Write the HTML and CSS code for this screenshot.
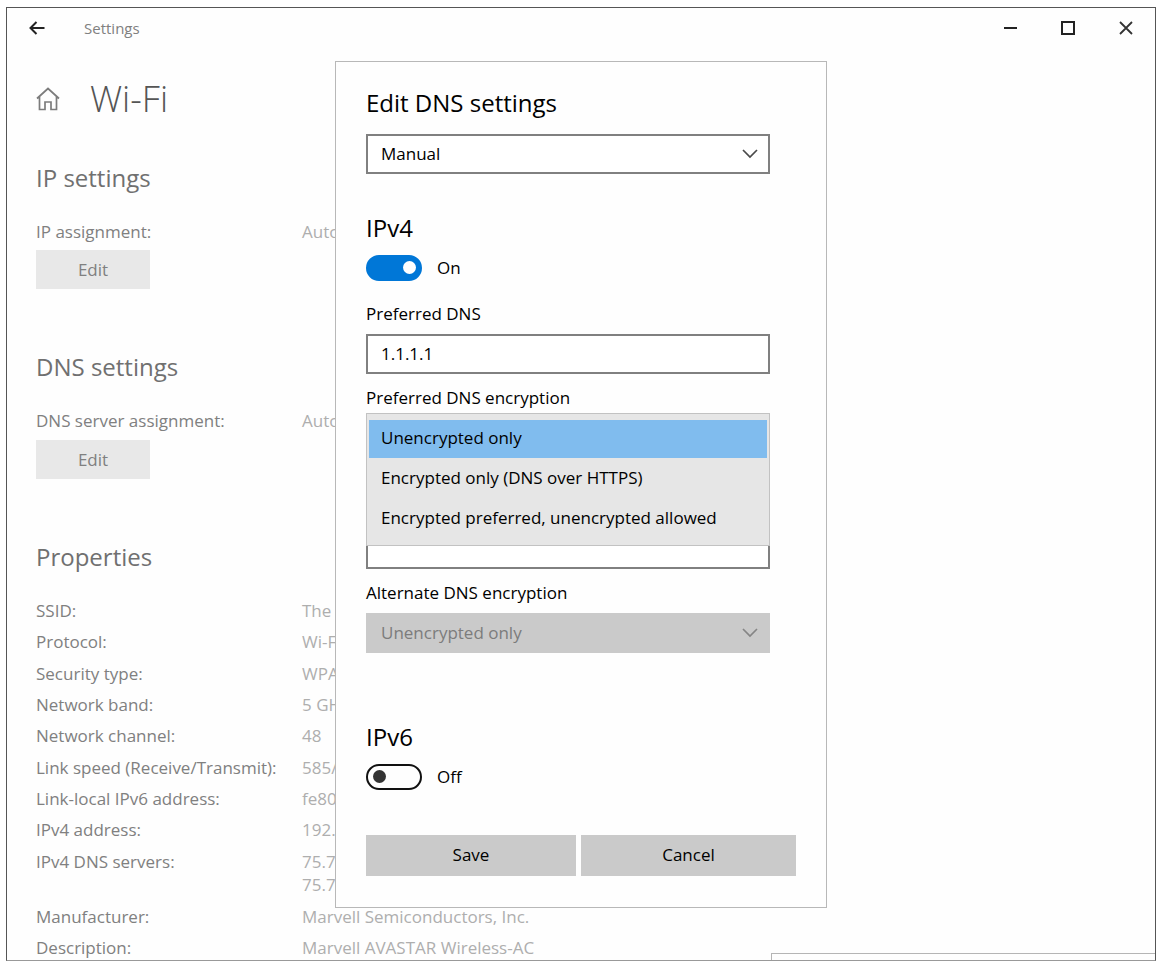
FILE: index.html
```html
<!DOCTYPE html>
<html lang="en">
<head>
<meta charset="utf-8">
<meta name="viewport" content="width=device-width, initial-scale=1">
<title>Settings</title>
<link rel="stylesheet" href="styles.css">
</head>
<body>
<div class="window">
  <header class="titlebar">
    <button class="back" type="button" aria-label="Back">
      <svg width="18" height="16" viewBox="0 0 18 16"><path d="M16.500 8H3M8.500 2L2.500 8l6 6" fill="none" stroke="#222" stroke-width="2"/></svg>
    </button>
    <span class="app-name">Settings</span>
    <div class="window-controls">
      <button type="button" aria-label="Minimize"><svg width="14" height="14" viewBox="0 0 14 14"><path d="M1 7h13" stroke="#222" stroke-width="2"/></svg></button>
      <button type="button" aria-label="Maximize"><svg width="14" height="14" viewBox="0 0 14 14"><rect x="1" y="1" width="12" height="12" fill="none" stroke="#222" stroke-width="2"/></svg></button>
      <button type="button" aria-label="Close"><svg width="14" height="14" viewBox="0 0 14 14"><path d="M1 1l12 12M13 1L1 13" stroke="#333" stroke-width="1.800"/></svg></button>
    </div>
  </header>

  <main class="page">
    <div class="page-title">
      <svg width="24" height="24" viewBox="0 0 24 24"><path d="M1 11.500L12 1.500l11 10M3.500 9.500V22.500h5.500v-7.500h6v7.500h5.500V9.500" fill="none" stroke="#7c7c7c" stroke-width="1.700"/></svg>
      <h1>Wi-Fi</h1>
    </div>

    <section class="group">
      <h2>IP settings</h2>
      <dl class="rows"><dt>IP assignment:</dt><dd>Auto</dd></dl>
      <button class="edit" type="button">Edit</button>
    </section>

    <section class="group">
      <h2>DNS settings</h2>
      <dl class="rows"><dt>DNS server assignment:</dt><dd>Auto</dd></dl>
      <button class="edit" type="button">Edit</button>
    </section>

    <section class="group">
      <h2>Properties</h2>
      <dl class="rows">
        <dt>SSID:</dt><dd>The</dd>
        <dt>Protocol:</dt><dd>Wi-Fi</dd>
        <dt>Security type:</dt><dd>WPA</dd>
        <dt>Network band:</dt><dd>5 GHz</dd>
        <dt>Network channel:</dt><dd>48</dd>
        <dt>Link speed (Receive/Transmit):</dt><dd>585/</dd>
        <dt>Link-local IPv6 address:</dt><dd>fe80</dd>
        <dt>IPv4 address:</dt><dd>192.1</dd>
        <dt>IPv4 DNS servers:</dt><dd>75.75<br>75.75</dd>
        <dt>Manufacturer:</dt><dd>Marvell Semiconductors, Inc.</dd>
        <dt>Description:</dt><dd>Marvell AVASTAR Wireless-AC</dd>
      </dl>
    </section>
  </main>

  <div class="overlay">
    <form class="dialog" role="dialog" aria-labelledby="dialog-title">
      <h2 id="dialog-title">Edit DNS settings</h2>
      <div class="combo mode">
        <select aria-labelledby="dialog-title"><option>Manual</option></select>
        <svg class="chevron" width="18" height="10" viewBox="0 0 18 10"><path d="M2 1l7 7 7-7" fill="none" stroke="#4a4a4a" stroke-width="1.700"/></svg>
      </div>

      <h2 class="protocol">IPv4</h2>
      <label class="toggle"><input type="checkbox" role="switch" checked><span>On</span></label>

      <label class="caption first" for="dns1">Preferred DNS</label>
      <input class="text" id="dns1" type="text" value="1.1.1.1">

      <label class="caption open" for="enc1">Preferred DNS encryption</label>
      <div class="anchor">
        <select class="menu" id="enc1" size="3">
          <option selected>Unencrypted only</option>
          <option>Encrypted only (DNS over HTTPS)</option>
          <option>Encrypted preferred, unencrypted allowed</option>
        </select>
      </div>
      <input class="text" type="text" aria-label="Alternate DNS">

      <label class="caption" for="enc2">Alternate DNS encryption</label>
      <div class="combo">
        <select id="enc2" disabled><option>Unencrypted only</option></select>
        <svg class="chevron" width="18" height="10" viewBox="0 0 18 10"><path d="M2 1l7 7 7-7" fill="none" stroke="#858585" stroke-width="1.700"/></svg>
      </div>

      <h2 class="protocol last">IPv6</h2>
      <label class="toggle"><input type="checkbox" role="switch"><span>Off</span></label>

      <div class="actions">
        <button type="submit">Save</button>
        <button type="button">Cancel</button>
      </div>
    </form>
  </div>
  <div class="corner-panel"></div>
</div>
</body>
</html>
```
FILE: styles.css
```css
* { box-sizing: border-box; }

body {
  margin: 0;
  height: 100vh;
  padding: 7px 9px 5px 6px;
  background: #fff;
  color: #000;
  font: 17px/1.375 "Open Sans", "Noto Sans", sans-serif;
  overflow: hidden;
}

button, input, select { font: inherit; color: inherit; margin: 0; border-radius: 0; }
h1, h2, dl, dd { margin: 0; font-weight: 400; }
button { border: 0; padding: 0; }

.window {
  position: relative;
  height: 100%;
  overflow: hidden;
  border: 1px solid #555;
  border-bottom-color: #999;
  background: #fefefe;
}

/* Title bar */
.titlebar { display: flex; align-items: center; height: 40px; }
.titlebar button { display: grid; place-items: center; height: 40px; background: none; }
.back { width: 60px; }
.app-name { margin-left: 17px; font-size: 15px; color: #808080; }
.window-controls { display: flex; margin-left: auto; }
.window-controls button { width: 58px; }

/* Page behind the dialog */
.page { padding: 27px 0 0 29px; color: #808080; }
.page-title { display: flex; align-items: center; gap: 30px; }
.page-title h1 { font-size: 36px; line-height: 48px; font-weight: 300; color: #555; }
.page-title + .group { margin-top: 39px; }
.group + .group { margin-top: 62px; }
.group h2 { font-size: 24px; line-height: 32px; margin-bottom: 26px; color: #707070; }
.rows { display: grid; grid-template-columns: 266px 1fr; row-gap: 8px; }
.rows dd { color: #aeaeae; }
.edit { display: block; width: 114px; height: 39px; margin-top: 7px; background: #e8e8e8; color: #808080; }

/* Dialog */
.overlay { position: absolute; inset: 0; display: grid; place-items: center; }
.dialog {
  width: 492px;
  padding: 25px 30px 31px;
  border: 1px solid #b8b8b8;
  background: #fefefe;
}
.dialog h2 { font-size: 24px; line-height: 32px; }
.dialog .mode { margin-top: 15px; }
.dialog .protocol { margin-top: 38px; }
.dialog .last { margin-top: 68px; }

.combo, .anchor { position: relative; margin-right: 26px; }
.combo select, .text {
  display: block;
  height: 40px;
  padding: 0 13px;
  border: 2px solid #808080;
  background: #fff;
  appearance: none;
}
.combo select { width: 100%; }
.text { width: calc(100% - 26px); }
.combo select:disabled { border-color: #cacaca; background: #cacaca; color: #7c7c7c; opacity: 1; }
.chevron { position: absolute; right: 11px; top: 15px; pointer-events: none; }

.toggle { display: flex; align-items: center; gap: 15px; width: max-content; height: 26px; margin-top: 11px; }
.toggle input {
  appearance: none;
  display: flex;
  align-items: center;
  width: 56px;
  height: 26px;
  padding: 0 5px;
  border: 2px solid #111;
  border-radius: 13px;
}
.toggle input::before { content: ""; width: 13px; height: 13px; border-radius: 50%; background: #333; }
.toggle input:checked { justify-content: flex-end; padding: 0 4px; border-color: #0077d7; background: #0077d7; }
.toggle input:checked::before { background: #fff; }

.caption { display: block; width: max-content; line-height: 24px; margin: 12px 0 8px; }
.first { margin-top: 21px; }
.open { margin-bottom: 3px; }

/* Open list, drawn over the field below it */
.anchor { height: 116px; }
.menu {
  position: absolute;
  inset: 0 0 auto;
  z-index: 1;
  width: 100%;
  height: 133px;
  padding: 6px 2px;
  border: 1px solid #c2c2c2;
  background: #e6e6e6;
  overflow: hidden;
  outline: 0;
}
.menu option { padding: 6px 12px 0; height: 40px; min-height: 40px; color: #000; }
.menu option:checked { background: linear-gradient(#80bcee, #80bcee) 0 0 / 100% 38px no-repeat; color: #000; }

.actions { display: grid; grid-template-columns: 42fr 43fr; gap: 5px; margin-top: 45px; }
.actions button { height: 41px; background: #cacaca; }

/* Edge of the panel behind the lower right corner */
.corner-panel {
  position: absolute;
  right: 0;
  bottom: -1px;
  width: calc(100% - 764px);
  height: 8px;
  border: solid #b5b5b5;
  border-width: 1px 0 0 1px;
  background: #fefefe;
}
```
